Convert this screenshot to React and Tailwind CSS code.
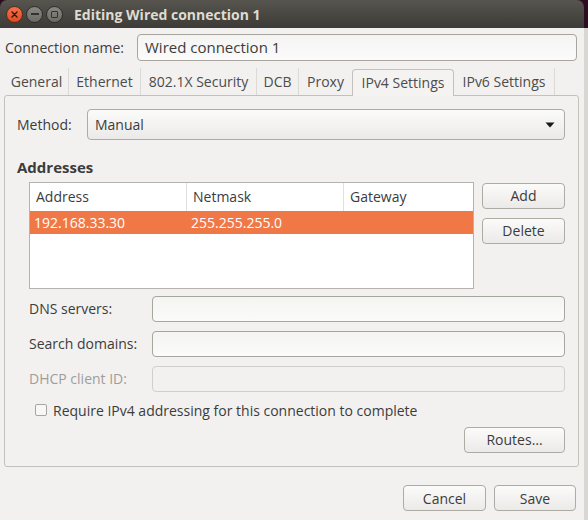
import React from "react";

const font = { fontFamily: '"Open Sans", "Noto Sans", "DejaVu Sans", sans-serif' };

function TitleButton({ kind }) {
  if (kind === "close") {
    return (
      <div className="flex h-[17px] w-[17px] items-center justify-center rounded-full border border-[#5a2a1a] bg-gradient-to-b from-[#f5714a] to-[#df4a1f]">
        <svg width="7" height="7" viewBox="0 0 7 7">
          <path d="M1 1L6 6M6 1L1 6" stroke="#3b1208" strokeWidth="1.4" strokeLinecap="round" />
        </svg>
      </div>
    );
  }
  return (
    <div className="flex h-[17px] w-[17px] items-center justify-center rounded-full border border-[#2e2d2a] bg-gradient-to-b from-[#8a8883] to-[#6c6a65]">
      {kind === "min" ? (
        <div className="h-[1.5px] w-[8px] bg-[#34332f]" />
      ) : (
        <div className="h-[7px] w-[7px] rounded-[1px] border border-[#34332f]" />
      )}
    </div>
  );
}

function Button({ children, className = "" }) {
  return (
    <div
      className={
        "flex h-[26px] items-center justify-center rounded-[4px] border border-[#aeaaa4] bg-gradient-to-b from-[#fbfbfa] to-[#ebeae8] text-[14px] text-[#3c3c3c] " +
        className
      }
    >
      {children}
    </div>
  );
}

function Field({ disabled }) {
  return (
    <div
      className={
        "h-[26px] flex-1 rounded-[4px] border " +
        (disabled
          ? "border-[#d1cfcb] bg-[#f2f1f0]"
          : "border-[#a8a49e] bg-gradient-to-b from-[#f4f4f3] to-[#fbfbfb]")
      }
    />
  );
}

const tabs = [
  { label: "General", w: "w-[64px]" },
  { label: "Ethernet", w: "w-[72px]" },
  { label: "802.1X Security", w: "w-[116px]" },
  { label: "DCB", w: "w-[42px]" },
  { label: "Proxy", w: "w-[53px]" },
  { label: "IPv4 Settings", w: "w-[102px]", active: true },
  { label: "IPv6 Settings", w: "w-[101px]" },
];

export default function App() {
  return (
    <div className="flex h-[520px] w-[588px] bg-[#2c0d22]" style={font}>
      <div className="flex w-[584px] flex-col overflow-hidden rounded-t-[7px]">
        {/* title bar */}
        <div className="flex h-[28px] items-center gap-[3px] bg-gradient-to-b from-[#57554e] to-[#3c3b37] pl-[6px]">
          <TitleButton kind="close" />
          <TitleButton kind="min" />
          <TitleButton kind="max" />
          <span className="ml-[8px] text-[14px] font-bold text-[#dfdbd2]">Editing Wired connection 1</span>
        </div>

        <div className="flex flex-1 flex-col bg-[#f2f1f0] text-[14px] text-[#3c3c3c]">
          {/* connection name */}
          <div className="flex items-center pl-[5px] pr-[7px] pt-[6px]">
            <span className="w-[132px]">Connection name:</span>
            <div className="flex h-[27px] flex-1 items-center rounded-[4px] border border-[#a8a49e] bg-gradient-to-b from-[#f4f4f3] to-[#fbfbfb] px-[7px] text-[15px]">
              Wired connection 1
            </div>
          </div>

          {/* tabs */}
          <div className="mt-[7px] flex h-[27px] items-stretch pl-[5px]">
            {tabs.map((t, i) => {
              const nextActive = tabs[i + 1] && tabs[i + 1].active;
              return (
                <div
                  key={t.label}
                  className={
                    "flex items-center justify-center text-[#4c4c4c] " +
                    t.w +
                    " " +
                    (t.active
                      ? "relative top-[1px] rounded-t-[4px] border border-b-0 border-[#c4c1bc] bg-[#f4f3f2] pb-[1px]"
                      : nextActive
                      ? ""
                      : "border-r border-[#dcdad6]")
                  }
                >
                  {t.label}
                </div>
              );
            })}
          </div>

          {/* notebook */}
          <div className="ml-[4px] mr-[5px] flex h-[372px] flex-col rounded-[3px] border border-[#c4c1bc] pl-[12px] pr-[13px] pt-[13px]">
            <div className="flex items-center">
              <span className="w-[70px]">Method:</span>
              <div className="flex h-[31px] flex-1 items-center justify-between rounded-[4px] border border-[#aeaaa4] bg-gradient-to-b from-[#fbfbfa] to-[#ebeae8] pl-[7px] pr-[9px]">
                <span>Manual</span>
                <svg width="10" height="6" viewBox="0 0 10 6">
                  <path d="M0.5 0.5H9.5L5 5.5Z" fill="#1a1a1a" />
                </svg>
              </div>
            </div>

            <div className="mt-[16px] text-[15px] font-bold text-[#3c3c3c]">Addresses</div>

            <div className="ml-[12px] mt-[3px] flex gap-[8px]">
              <div className="flex h-[107px] w-[445px] flex-col border border-[#b6b3ae] bg-white">
                <div className="flex h-[28px] items-center">
                  <div className="flex h-full w-[157px] items-center border-r border-[#e2e0dd] px-[6px]">Address</div>
                  <div className="flex h-full w-[157px] items-center border-r border-[#e2e0dd] px-[6px]">Netmask</div>
                  <div className="flex h-full flex-1 items-center px-[6px]">Gateway</div>
                </div>
                <div className="flex h-[23px] items-center bg-[#f07746] text-white">
                  <div className="w-[157px] px-[4px]">192.168.33.30</div>
                  <div className="w-[157px] px-[4px]">255.255.255.0</div>
                </div>
              </div>
              <div className="flex flex-1 flex-col gap-[9px] pt-[1px]">
                <Button>Add</Button>
                <Button>Delete</Button>
              </div>
            </div>

            <div className="ml-[12px] mt-[7px] flex flex-col gap-[9px]">
              <div className="flex items-center">
                <span className="w-[123px]">DNS servers:</span>
                <Field />
              </div>
              <div className="flex items-center">
                <span className="w-[123px]">Search domains:</span>
                <Field />
              </div>
              <div className="flex items-center">
                <span className="w-[123px] text-[#a09d99]">DHCP client ID:</span>
                <Field disabled />
              </div>
            </div>

            <div className="ml-[18px] mt-[8px] flex items-center gap-[6px]">
              <div className="h-[12px] w-[12px] rounded-[2px] border border-[#a8a49e] bg-[#f7f7f6]" />
              <span>Require IPv4 addressing for this connection to complete</span>
            </div>

            <div className="mt-[6px] flex justify-end">
              <Button className="w-[101px]">Routes…</Button>
            </div>
          </div>

          {/* bottom buttons */}
          <div className="mt-[18px] flex justify-end gap-[8px] pr-[8px]">
            <Button className="w-[83px]">Cancel</Button>
            <Button className="w-[82px]">Save</Button>
          </div>
        </div>
      </div>
      <div className="flex w-[4px] flex-col">
        <div className="h-[28px] bg-[#2c0d22]" />
        <div className="flex-1 bg-[#d9d7d4]" />
      </div>
    </div>
  );
}
